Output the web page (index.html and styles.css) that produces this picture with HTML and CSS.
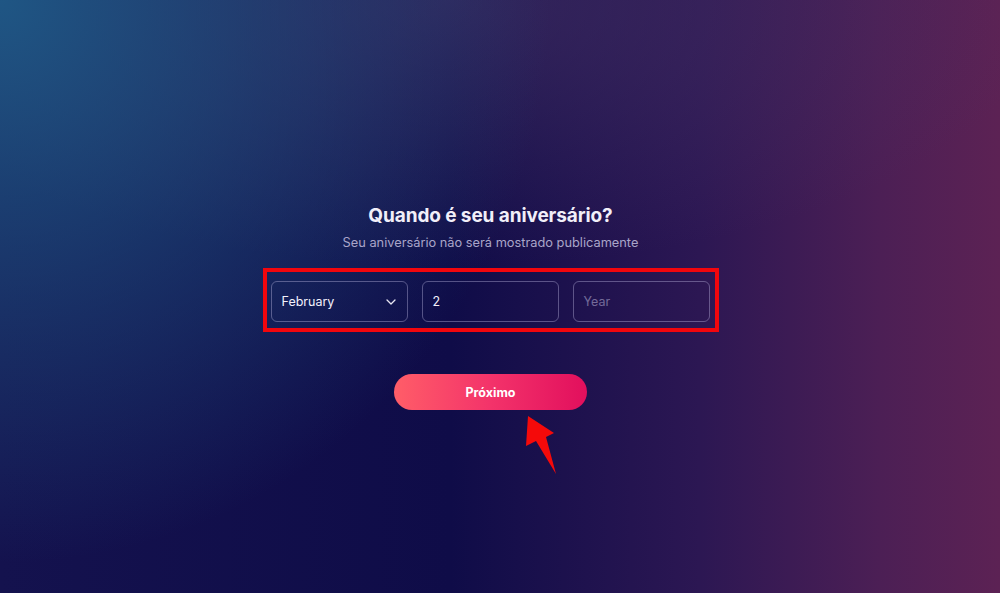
FILE: index.html
```html
<!DOCTYPE html>
<html lang="pt">
<head>
<meta charset="utf-8">
<title>Quando é seu aniversário?</title>
<link rel="stylesheet" href="styles.css">
</head>
<body>
<main class="page">
  <h1 class="title">Quando é seu aniversário?</h1>
  <p class="subtitle">Seu aniversário não será mostrado publicamente</p>
  <div class="highlight">
    <div class="field select">
      <span>February</span>
      <svg class="chev" width="10" height="6" viewBox="0 0 10 6"><path d="M1 1 L5 5 L9 1" fill="none" stroke="#e8e6f2" stroke-width="1.3" stroke-linecap="round" stroke-linejoin="round"/></svg>
    </div>
    <div class="field"><span>2</span></div>
    <div class="field placeholder"><span>Year</span></div>
  </div>
  <button class="next">Próximo</button>
</main>
<svg class="arrow" width="1000" height="593" viewBox="0 0 1000 593">
  <polygon points="528,416 554,433 546,437 556,474 536,441 526,446" fill="#f50a0a"/>
</svg>
</body>
</html>
```
FILE: styles.css
```css
html, body {
  margin: 0;
  padding: 0;
}
body {
  width: 1000px;
  height: 593px;
  overflow: hidden;
  position: relative;
  font-family: Inter, "Noto Sans", sans-serif;
  background:
    radial-gradient(ellipse 55% 95% at 0% 0%, rgba(31, 86, 132, 1) 0%, rgba(31, 86, 132, 0.55) 45%, rgba(31, 86, 132, 0) 100%),
    radial-gradient(ellipse 60% 45% at 45% 0%, rgba(75, 55, 105, 0.55) 0%, rgba(75, 55, 105, 0) 100%),
    linear-gradient(to right, #14124e 0%, #0f0c48 45%, #2c1753 70%, #4c1f55 88%, #5c2254 100%);
}
.page {
  width: 981px;
  display: flex;
  flex-direction: column;
  align-items: center;
  padding-top: 204px;
}
.title {
  margin: 0;
  font-size: 19px;
  line-height: 24px;
  font-weight: 700;
  color: #f1eff9;
  letter-spacing: -0.1px;
}
.subtitle {
  margin: 7px 0 0;
  font-size: 12.8px;
  line-height: 16px;
  color: #a9a5c9;
}
.highlight {
  margin-top: 17px;
  border: 4px solid #f2060d;
  padding: 9px 5px 6px 4px;
  display: flex;
  gap: 14px;
}
.field {
  box-sizing: border-box;
  width: 137px;
  height: 41px;
  border: 1px solid rgba(200, 195, 235, 0.38);
  border-radius: 6px;
  display: flex;
  align-items: center;
  justify-content: space-between;
  padding: 0 11px 0 10px;
  font-size: 12.5px;
  color: #f3f1fb;
}
.placeholder {
  color: rgba(200, 196, 228, 0.5);
}
.next {
  margin-top: 42px;
  width: 193px;
  height: 36px;
  border: none;
  border-radius: 18px;
  background: linear-gradient(to right, #ff5d68 0%, #f3336a 50%, #e20f5d 100%);
  color: #ffffff;
  font-family: Inter, "Noto Sans", sans-serif;
  font-size: 12.5px;
  font-weight: 700;
  cursor: pointer;
}
.arrow {
  position: absolute;
  left: 0;
  top: 0;
  pointer-events: none;
}
```
